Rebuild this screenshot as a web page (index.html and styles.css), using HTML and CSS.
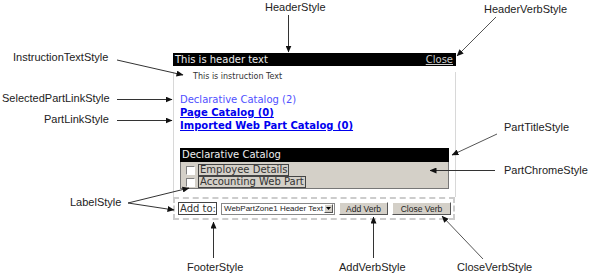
FILE: index.html
```html
<!DOCTYPE html>
<html lang="en">
<head>
  <meta charset="UTF-8">
  <title>CatalogZone Styles</title>
  <link rel="stylesheet" href="styles.css">
</head>
<body>

  <div class="diagram">

    <!-- Catalog zone -->
    <div class="zone">
      <div class="zone-header">
        <span>This is header text</span>
        <a href="#" class="header-verb">Close</a>
      </div>

      <div class="zone-body">
        <div class="instruction">This is instruction Text</div>

        <ul class="part-links">
          <li class="selected">Declarative Catalog (2)</li>
          <li><a href="#">Page Catalog (0)</a></li>
          <li><a href="#">Imported Web Part Catalog (0)</a></li>
        </ul>

        <div class="part">
          <div class="part-title">Declarative Catalog</div>
          <div class="part-chrome">
            <div class="part-item"><span class="check"></span><span class="label">Employee Details</span></div>
            <div class="part-item"><span class="check"></span><span class="label">Accounting Web Part</span></div>
          </div>
        </div>
      </div>

      <div class="zone-footer">
        <span class="label add-to">Add to:</span>
        <div class="select">
          <span class="select-text">WebPartZone1 Header Text</span>
          <span class="select-arrow">
            <svg width="5" height="3" viewBox="0 0 5 3"><path d="M0 0 H5 L2.5 3 Z" fill="#000"/></svg>
          </span>
        </div>
        <button class="verb add-verb">Add Verb</button>
        <button class="verb close-verb">Close Verb</button>
      </div>
    </div>

    <!-- Callouts -->
    <span class="callout c-header">HeaderStyle</span>
    <span class="callout c-header-verb">HeaderVerbStyle</span>
    <span class="callout c-instruction">InstructionTextStyle</span>
    <span class="callout c-selected">SelectedPartLinkStyle</span>
    <span class="callout c-part-link">PartLinkStyle</span>
    <span class="callout c-part-title">PartTitleStyle</span>
    <span class="callout c-chrome">PartChromeStyle</span>
    <span class="callout c-label">LabelStyle</span>
    <span class="callout c-footer">FooterStyle</span>
    <span class="callout c-add-verb">AddVerbStyle</span>
    <span class="callout c-close-verb">CloseVerbStyle</span>

    <svg class="arrows" width="590" height="277" viewBox="0 0 590 277">
      <defs>
        <marker id="head" markerWidth="7" markerHeight="6" refX="6.5" refY="3" orient="auto" markerUnits="userSpaceOnUse">
          <path d="M0 0 L7 3 L0 6 Z" fill="#111"/>
        </marker>
      </defs>
      <g stroke="#333" stroke-width="1" fill="none" marker-end="url(#head)">
        <line x1="288.5" y1="15" x2="288.5" y2="52"/>
        <line x1="496" y1="17" x2="457" y2="56" stroke="#555"/>
        <line x1="117" y1="60" x2="183" y2="75"/>
        <line x1="117" y1="99.5" x2="172" y2="99.5"/>
        <line x1="117" y1="120.5" x2="172" y2="120.5"/>
        <line x1="497" y1="134" x2="452" y2="155" stroke="#555"/>
        <line x1="495" y1="170.5" x2="430" y2="170.5"/>
        <line x1="128" y1="203" x2="189" y2="188"/>
        <line x1="128" y1="203" x2="174" y2="210"/>
        <line x1="213.5" y1="258" x2="213.5" y2="222"/>
        <line x1="373.5" y1="258" x2="373.5" y2="217"/>
        <line x1="483" y1="259" x2="442" y2="216" stroke="#555"/>
      </g>
    </svg>

  </div>

</body>
</html>
```

FILE: styles.css
```css
/* General Styles */
body {
  margin: 0;
  background-color: #fff;
}

.diagram {
  position: relative;
  width: 590px;
  height: 277px;
  padding: 53px 0 0 173px;
  box-sizing: border-box;
  font-family: "DejaVu Sans", Verdana, sans-serif;
}

/* Catalog zone */
.zone {
  width: 283px;
}

.zone-header {
  display: flex;
  justify-content: space-between;
  height: 13px;
  line-height: 13px;
  padding: 0 3px 0 2px;
  background-color: #000;
  color: #eee;
  font-size: 10px;
}

.header-verb {
  color: #ccc;
}

.zone-body {
  border-left: 1px solid #d8d8d8;
  border-right: 1px solid #d8d8d8;
  padding-bottom: 8px;
}

.instruction {
  margin-top: 6px;
  padding-left: 19px;
  height: 10px;
  line-height: 10px;
  font-size: 8px;
  color: #333;
}

.part-links {
  list-style: none;
  margin: 11px 0 0;
  padding: 0 0 0 6px;
  font-size: 10px;
  line-height: 13px;
}

.part-links .selected {
  color: #5050ff;
}

.part-links a {
  color: #0000ee;
  font-weight: bold;
}

.part {
  margin: 16px 6px 0;
}

.part-title {
  height: 14px;
  line-height: 14px;
  padding-left: 2px;
  background-color: #000;
  color: #eee;
  font-size: 10px;
}

.part-chrome {
  height: 27px;
  padding: 2px 0 0 5px;
  box-sizing: border-box;
  background-color: #d4d0c8;
  border: 1px solid #777;
  border-top: none;
}

.part-item {
  display: flex;
  align-items: center;
  gap: 3px;
  height: 12px;
}

.check {
  width: 7px;
  height: 7px;
  background-color: #fff;
  border: 1px solid;
  border-color: #808080 #fff #fff #808080;
}

.label {
  padding: 0 1px;
  border: 1px solid #444;
  line-height: 10px;
  font-size: 10px;
  color: #333;
  white-space: nowrap;
}

/* Footer */
.zone-footer {
  display: flex;
  align-items: center;
  gap: 4px;
  width: 282px;
  height: 23px;
  padding: 0 2px 0 3px;
  box-sizing: border-box;
  border: 2px dashed #ccc;
}

.add-to {
  flex-shrink: 0;
  width: 39px;
  height: 13px;
  box-sizing: border-box;
  line-height: 11px;
}

.select {
  display: flex;
  flex-shrink: 0;
  align-items: center;
  justify-content: space-between;
  width: 114px;
  height: 12px;
  box-sizing: border-box;
  border: 1px solid #888;
  background-color: #fff;
  font-family: "Liberation Sans", Arial, sans-serif;
  font-size: 8px;
  color: #222;
}

.select-text {
  padding-left: 2px;
  white-space: nowrap;
}

.select-arrow {
  display: flex;
  align-items: center;
  justify-content: center;
  width: 9px;
  height: 9px;
  margin-right: 1px;
  background-color: #d4d0c8;
  border: 1px solid;
  border-color: #fff #555 #555 #fff;
  box-sizing: border-box;
}

.verb {
  flex-shrink: 0;
  height: 13px;
  padding: 0;
  background-color: #d4d0c8;
  border: 1px solid;
  border-color: #fff #555 #555 #fff;
  font-family: "Liberation Sans", Arial, sans-serif;
  font-size: 8.5px;
  color: #222;
}

.add-verb {
  width: 49px;
}

.close-verb {
  width: 59px;
}

/* Callout labels */
.callout {
  position: absolute;
  font-family: "Liberation Sans", Arial, sans-serif;
  font-size: 11px;
  line-height: 13px;
  color: #222;
  white-space: nowrap;
}

.c-header { left: 265px; top: 1px; }
.c-header-verb { left: 484px; top: 3px; }
.c-instruction { left: 13px; top: 51px; }
.c-selected { left: 2px; top: 92px; }
.c-part-link { left: 44px; top: 113px; }
.c-part-title { left: 504px; top: 121px; }
.c-chrome { left: 504px; top: 164px; }
.c-label { left: 70px; top: 196px; }
.c-footer { left: 187px; top: 261px; }
.c-add-verb { left: 339px; top: 261px; }
.c-close-verb { left: 457px; top: 261px; }

.arrows {
  position: absolute;
  left: 0;
  top: 0;
}
```
